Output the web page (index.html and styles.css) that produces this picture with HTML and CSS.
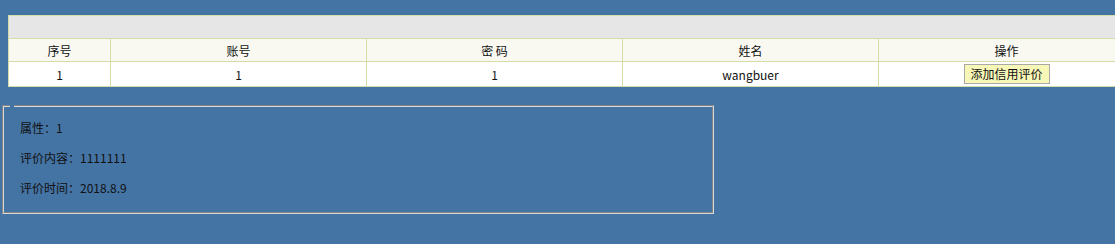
FILE: index.html
```html
<!DOCTYPE html>
<html>
<head>
<meta charset="utf-8">
<link rel="stylesheet" href="styles.css">
</head>
<body>
<div class="wrap">
  <table class="grid">
    <colgroup>
      <col class="c1"><col class="c2"><col class="c2"><col class="c2"><col class="c2">
    </colgroup>
    <tr class="bar"><td colspan="5"></td></tr>
    <tr class="head">
      <th>序号</th>
      <th>账号</th>
      <th>密 码</th>
      <th>姓名</th>
      <th>操作</th>
    </tr>
    <tr class="row">
      <td>1</td>
      <td>1</td>
      <td>1</td>
      <td>wangbuer</td>
      <td><button class="btn">添加信用评价</button></td>
    </tr>
  </table>
</div>
<fieldset class="info">
  <legend></legend>
  <p>属性：1</p>
  <p>评价内容：1111111</p>
  <p>评价时间：2018.8.9</p>
</fieldset>
</body>
</html>
```
FILE: styles.css
```css
html { overflow: hidden; }
body {
  margin: 0;
  background: #4474a4;
  font-family: "Microsoft YaHei", "Noto Sans CJK SC", "Liberation Sans", sans-serif;
  font-size: 12px;
  color: #111;
}
.wrap { padding: 15px 0 0 8px; }
.grid {
  border-collapse: collapse;
  width: 1126px;
  table-layout: fixed;
}
.grid td, .grid th {
  border: 1px solid #d4dca8;
  text-align: center;
  font-weight: normal;
  padding: 0;
}
.bar td { background: #e6e6e6; height: 22px; }
.head th { background: #f9f9f1; height: 22px; }
.row td { background: #fff; height: 24px; }
.c1 { width: 102px; }
.c2 { width: 256px; }
.btn {
  font-family: inherit;
  font-size: 12px;
  color: #111;
  background: #f7f7b8;
  border: 1px solid #a8a8a8;
  height: 20px;
  padding: 0 6px;
  margin: 0;
  line-height: 18px;
  vertical-align: middle;
}
.info {
  margin: 18px 0 0 2px;
  box-sizing: border-box;
  width: 712px;
  height: 109px;
  border: 2px groove #d8d8d8;
  padding: 0 0 0 16px;
}
.info legend { padding: 0 2px; margin-left: -10px; }
.info p { margin: 0; line-height: 30px; }
.info p:first-of-type { margin-top: 6px; }
```
